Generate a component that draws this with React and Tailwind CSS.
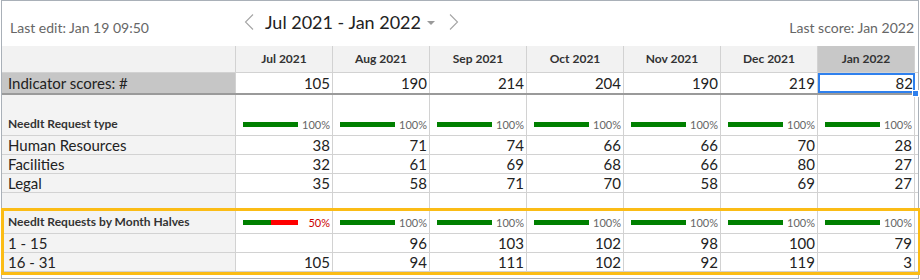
import React from "react";

const months = ["Jul 2021", "Aug 2021", "Sep 2021", "Oct 2021", "Nov 2021", "Dec 2021", "Jan 2022"];

const typeRows = [
  { label: "Human Resources", values: [38, 71, 74, 66, 66, 70, 28] },
  { label: "Facilities", values: [32, 61, 69, 68, 66, 80, 27] },
  { label: "Legal", values: [35, 58, 71, 70, 58, 69, 27] },
];

const halfRows = [
  { label: "1 - 15", values: ["", 96, 103, 102, 98, 100, 79] },
  { label: "16 - 31", values: [105, 94, 111, 102, 92, 119, 3] },
];

const scores = [105, 190, 214, 204, 190, 219, 82];
const halfPct = [50, 100, 100, 100, 100, 100, 100];

function Bar({ pct }) {
  return (
    <div className="flex h-full items-end justify-between pb-[5px] pl-[7px] pr-[2px]">
      <div className="mb-[3px] flex h-[5px] w-[55px] bg-[#ff0000]">
        <div className="h-full bg-[#008000]" style={{ width: `${pct}%` }} />
      </div>
      <span className={`text-[11px] leading-[11px] ${pct < 100 ? "text-[#cc0000]" : "text-[#666]"}`}>
        {pct}%
      </span>
    </div>
  );
}

function DataRow({ label, values, height = "h-[19px]" }) {
  return (
    <div className={`flex ${height} border-b border-[#d2d2d2]`}>
      <div className="flex w-[234px] items-center border-r border-[#d2d2d2] bg-[#f3f3f3] pl-[6px] text-[15px]">
        {label}
      </div>
      {values.map((v, i) => (
        <div
          key={i}
          className="flex w-[97px] items-center justify-end border-r border-[#d2d2d2] pr-[2px] text-[15px]"
        >
          {v}
        </div>
      ))}
    </div>
  );
}

function BarRow({ label, pcts, height }) {
  return (
    <div className={`flex ${height} border-b border-[#d2d2d2]`}>
      <div className="flex w-[234px] items-end border-r border-[#d2d2d2] bg-[#f3f3f3] pb-[4px] pl-[6px] text-[12px] font-bold leading-[14px] text-[#333]">
        {label}
      </div>
      {pcts.map((p, i) => (
        <div key={i} className="w-[97px] border-r border-[#d2d2d2]">
          <Bar pct={p} />
        </div>
      ))}
    </div>
  );
}

export default function App() {
  return (
    <div className="h-[280px] w-[920px] bg-white font-['Lato',sans-serif] text-[#222]">
      <div className="ml-[1px] h-[279px] w-[918px] border border-[#a9b0b8]">
        <div className="relative flex h-[45px] items-center justify-between pl-[8px] pr-[4px] pt-[8px] text-[14px] text-[#666]">
          <span>Last edit: Jan 19 09:50</span>
          <span>Last score: Jan 2022</span>
          <div className="absolute left-[240px] top-[10px] flex items-center text-[#222]">
            <svg width="14" height="20" viewBox="0 0 14 20" className="mr-[9px]">
              <path d="M11 2.5 L3.5 10 L11 17.5" fill="none" stroke="#a5a5a5" strokeWidth="1.1" />
            </svg>
            <span className="text-[18px] leading-[22px]">Jul 2021 - Jan 2022</span>
            <svg width="8" height="6" viewBox="0 0 8 6" className="ml-[6px] mt-[2px]">
              <path d="M0 1 L8 1 L4 5 Z" fill="#9a9a9a" />
            </svg>
            <svg width="14" height="20" viewBox="0 0 14 20" className="ml-[12px]">
              <path d="M3 2.5 L10.5 10 L3 17.5" fill="none" stroke="#a5a5a5" strokeWidth="1.1" />
            </svg>
          </div>
        </div>

        <div className="flex h-[27px] border-b border-[#d2d2d2] text-[12px] font-bold text-[#333]">
          <div className="w-[234px] border-r border-[#d2d2d2] bg-[#f2f2f2]" />
          {months.map((m, i) => (
            <div
              key={m}
              className={`flex w-[97px] items-center justify-center border-r border-[#d2d2d2] ${
                i === 6 ? "bg-[#c8c8c8]" : "bg-[#f2f2f2]"
              }`}
            >
              {m}
            </div>
          ))}
        </div>

        <div className="flex h-[22px] border-b-2 border-[#9a9a9a] text-[15px]">
          <div className="flex w-[234px] items-center border-r border-[#d2d2d2] bg-[#c6c6c6] pl-[6px]">
            Indicator scores: #
          </div>
          {scores.map((v, i) => (
            <div
              key={i}
              className={`relative flex w-[97px] items-center justify-end pr-[2px] ${
                i === 6 ? "" : "border-r border-[#d2d2d2]"
              }`}
            >
              {v}
              {i === 6 && (
                <>
                  <div className="absolute inset-0 border-2 border-[#2f80ed]" />
                  <div className="absolute -bottom-[3px] -right-[3px] h-[5px] w-[5px] bg-[#2f80ed] ring-1 ring-white" />
                </>
              )}
            </div>
          ))}
        </div>

        <BarRow label="NeedIt Request type" pcts={[100, 100, 100, 100, 100, 100, 100]} height="h-[41px]" />
        {typeRows.map((r) => (
          <DataRow key={r.label} label={r.label} values={r.values} />
        ))}
        <DataRow label="" values={["", "", "", "", "", "", ""]} height="h-[18px]" />

        <div className="relative">
          <BarRow label="NeedIt Requests by Month Halves" pcts={halfPct} height="h-[23px]" />
          {halfRows.map((r) => (
            <DataRow key={r.label} label={r.label} values={r.values} />
          ))}
          <div className="pointer-events-none absolute -bottom-[3px] -left-[1px] -right-[3px] -top-[3px] border-[3px] border-[#fbbc16]" />
        </div>
      </div>
    </div>
  );
}
